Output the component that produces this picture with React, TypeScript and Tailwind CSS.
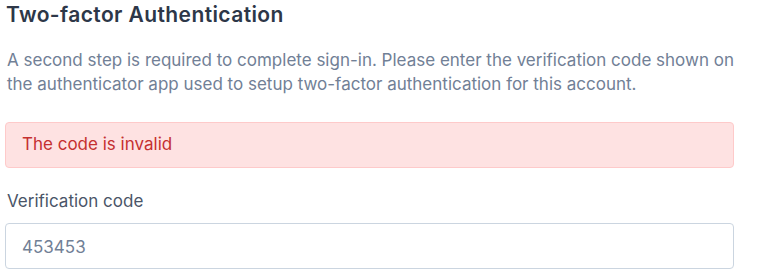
import React from 'react';

const App = () => {
  return (
    <div
      className="w-[759px] h-[278px] bg-white overflow-hidden pl-[5px] pt-[1px]"
      style={{ fontFamily: 'Inter, "Noto Sans", sans-serif' }}
    >
      <h1 className="pl-[1px] text-[21px] leading-[28px] font-semibold tracking-[0.4px] text-[#2d3748]">
        Two-factor Authentication
      </h1>

      <p className="mt-[19px] pl-[2px] text-[17px] leading-[24px] text-[#718096] whitespace-nowrap">
        A second step is required to complete sign-in. Please enter the verification code shown on
        <br />
        the authenticator app used to setup two-factor authentication for this account.
      </p>

      {/* Error alert */}
      <div className="mt-[26px] w-[729px] rounded-[4px] border border-[#fecaca] bg-[#fee2e2] px-4 pt-[9px] pb-[11px] text-[17px] leading-[24px] text-[#c53030]">
        The code is invalid
      </div>

      {/* Code field */}
      <label className="mt-[21px] block pl-[2px] text-[17px] leading-[24px] text-[#4a5568]">
        Verification code
      </label>
      <input
        type="text"
        defaultValue="453453"
        className="mt-[10px] block w-[729px] rounded-[4px] border border-[#cbd5e0] bg-white px-4 pt-[11px] pb-[9px] text-[17px] leading-[24px] text-[#718096] outline-none"
      />
    </div>
  );
};

export default App;
